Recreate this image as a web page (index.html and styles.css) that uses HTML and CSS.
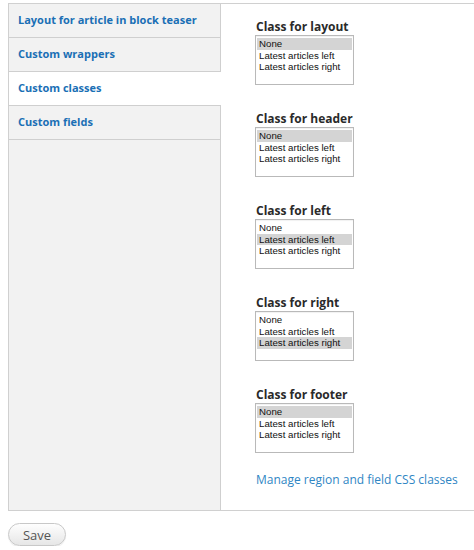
FILE: index.html
```html
<!DOCTYPE html>
<html>
<head>
<meta charset="utf-8">
<link rel="stylesheet" href="styles.css">
</head>
<body>
<div class="vtabs">
  <ul class="tab-list">
    <li class="tab"><a href="#">Layout for article in block teaser</a></li>
    <li class="tab"><a href="#">Custom wrappers</a></li>
    <li class="tab active"><a href="#">Custom classes</a></li>
    <li class="tab"><a href="#">Custom fields</a></li>
  </ul>
  <div class="panel">
    <div class="item">
      <div class="label">Class for layout</div>
      <div class="listbox">
        <div class="opt sel">None</div>
        <div class="opt">Latest articles left</div>
        <div class="opt">Latest articles right</div>
      </div>
    </div>
    <div class="item">
      <div class="label">Class for header</div>
      <div class="listbox">
        <div class="opt sel">None</div>
        <div class="opt">Latest articles left</div>
        <div class="opt">Latest articles right</div>
      </div>
    </div>
    <div class="item">
      <div class="label">Class for left</div>
      <div class="listbox">
        <div class="opt">None</div>
        <div class="opt sel">Latest articles left</div>
        <div class="opt">Latest articles right</div>
      </div>
    </div>
    <div class="item">
      <div class="label">Class for right</div>
      <div class="listbox">
        <div class="opt">None</div>
        <div class="opt">Latest articles left</div>
        <div class="opt sel">Latest articles right</div>
      </div>
    </div>
    <div class="item last">
      <div class="label">Class for footer</div>
      <div class="listbox">
        <div class="opt sel">None</div>
        <div class="opt">Latest articles left</div>
        <div class="opt">Latest articles right</div>
      </div>
    </div>
    <a class="manage" href="#">Manage region and field CSS classes</a>
  </div>
</div>
<button class="save">Save</button>
</body>
</html>
```

FILE: styles.css
```css
html, body {
  margin: 0;
  padding: 0;
  background: #fff;
  overflow: hidden;
}
body {
  font-family: "Open Sans", "DejaVu Sans", sans-serif;
}
.vtabs {
  margin: 3px 0 0 8px;
  border: 1px solid #d0d0d0;
  border-right: none;
  display: flex;
}
.tab-list {
  list-style: none;
  margin: 0;
  padding: 0;
  width: 211px;
  flex: none;
  background: #f2f2f2;
  border-right: 1px solid #cfcfcf;
}
.tab {
  height: 33px;
  border-bottom: 1px solid #cfcfcf;
  box-sizing: content-box;
}
.tab a {
  display: block;
  padding: 8px 9px 10px;
  line-height: 15px;
  font-size: 11px;
  font-weight: 700;
  color: #1a6fb5;
  text-decoration: none;
  white-space: nowrap;
}
.tab.active {
  background: #fff;
  margin-right: -1px;
  position: relative;
}
.panel {
  flex: 1;
  padding: 13px 0 21px 35px;
}
.item {
  margin-bottom: 24px;
}
.item.last {
  margin-bottom: 18px;
}
.label {
  font-size: 12px;
  font-weight: 700;
  line-height: 17px;
  padding-top: 1px;
  color: #2a2a2a;
  white-space: nowrap;
}
.listbox {
  width: 95px;
  height: 46px;
  border: 1px solid #b9b9b9;
  padding: 2px 1px 0 1px;
  box-sizing: content-box;
  margin-left: -1px;
  box-shadow: inset 0 1px 1px rgba(0,0,0,0.06);
}
.opt {
  font-family: "Liberation Sans", Arial, sans-serif;
  font-size: 9.7px;
  line-height: 11.7px;
  height: 11.7px;
  padding-left: 2px;
  color: #111;
  white-space: nowrap;
}
.opt.sel {
  background: #d4d4d4;
}
.manage {
  display: block;
  font-size: 12px;
  line-height: 18px;
  color: #2f86c4;
  text-decoration: none;
  white-space: nowrap;
}
.save {
  display: block;
  margin: 12px 0 0 8px;
  width: 58px;
  height: 23px;
  border: 1px solid #c8c8c8;
  border-radius: 12px;
  background: linear-gradient(#fefefe, #e6e6e6);
  font-family: "Open Sans", "DejaVu Sans", sans-serif;
  font-size: 13px;
  color: #555;
  padding: 0;
  box-shadow: 0 1px 1px rgba(0,0,0,0.08);
}
```
